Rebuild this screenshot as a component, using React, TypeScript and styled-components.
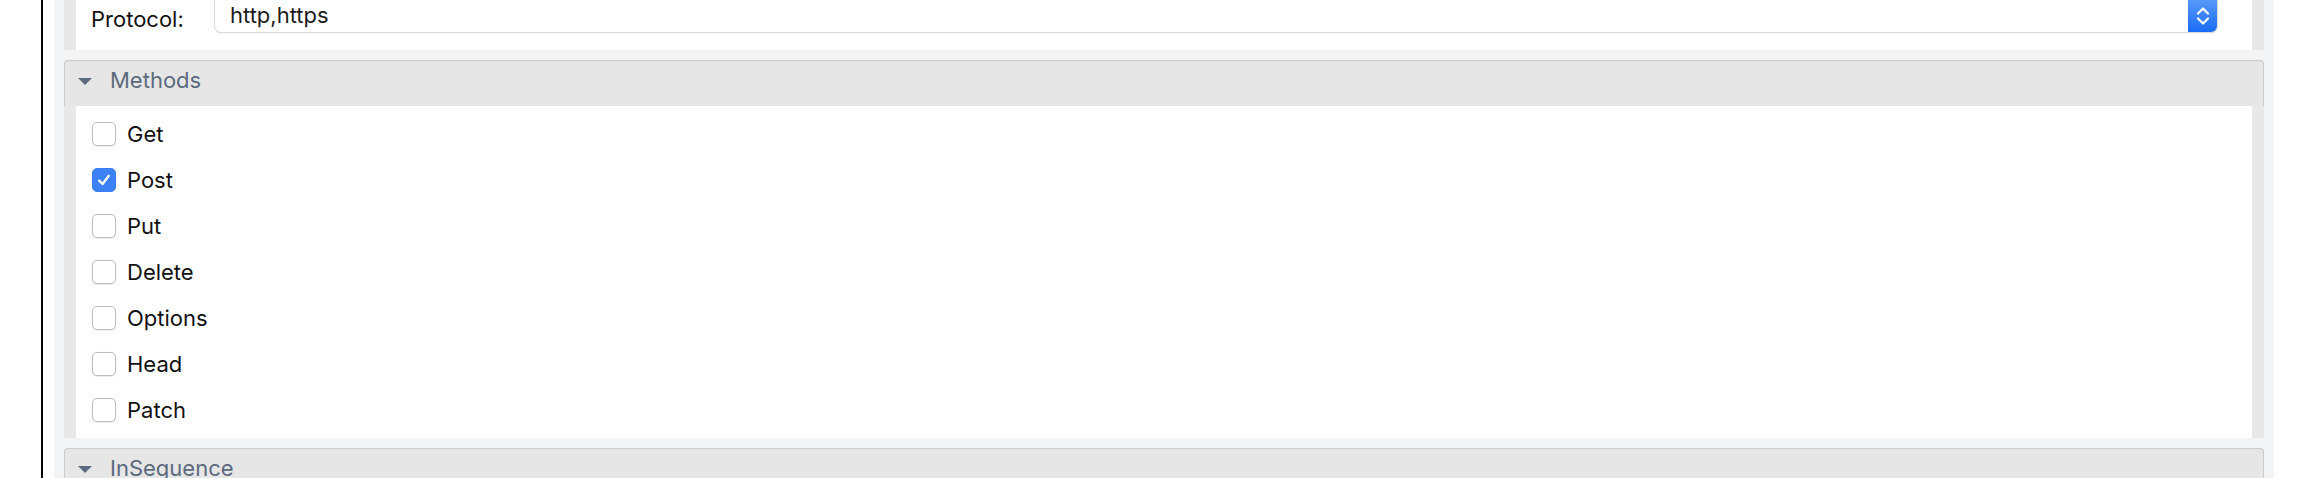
import React from "react";
import styled, { createGlobalStyle } from "styled-components";

const Global = createGlobalStyle`
  html, body { margin: 0; padding: 0; background: #ffffff; }
  body { font-family: Inter, "Noto Sans", "Liberation Sans", sans-serif; -webkit-font-smoothing: antialiased; }
`;

const Page = styled.div`
  display: flex;
  width: 2300px;
  height: 478px;
  overflow: hidden;
  background: #ffffff;
`;

const Gutter = styled.div`
  width: 41px;
  flex: none;
`;

const Rule = styled.div`
  width: 2px;
  flex: none;
  background: #000000;
`;

const Spacer = styled.div`
  width: 11px;
  flex: none;
`;

const Panel = styled.div`
  width: 2200px;
  flex: none;
  padding: 0 10px;
  background: #f3f4f6;
  display: flex;
  flex-direction: column;
  gap: 10px;
  margin-top: -8px;
`;

const Section = styled.section`
  display: flex;
  flex-direction: column;
`;

const Header = styled.div`
  box-sizing: border-box;
  height: 46px;
  display: flex;
  align-items: flex-start;
  padding: 7px 0 0 13px;
  gap: 18px;
  background: #e6e6e6;
  border: 1px solid #cbcbcb;
  border-bottom: none;
  border-radius: 4px 4px 0 0;
  color: #5b6a7d;
  font-size: 22px;
  line-height: 24px;
  flex: none;
`;

const Caret = styled.span`
  width: 0;
  height: 0;
  border-left: 7.5px solid transparent;
  border-right: 7.5px solid transparent;
  border-top: 7.5px solid #5b6a7d;
  margin-top: 10px;
`;

const Body = styled.div`
  background: #e8e8e8;
  padding: 0 12px;
`;

const Inner = styled.div<{ $pad?: string }>`
  background: #ffffff;
  padding: ${(p) => p.$pad ?? "16px 0 16px 16px"};
  display: flex;
  flex-direction: column;
  gap: 22px;
`;

const FieldRow = styled.div`
  height: 58px;
  display: flex;
  align-items: flex-start;
  padding-right: 35px;
`;

const FieldLabel = styled.label`
  box-sizing: border-box;
  width: 139px;
  flex: none;
  padding-left: 15px;
  padding-top: 14px;
  font-size: 22px;
  color: #111111;
`;

const Select = styled.div`
  flex: 1;
  height: 40px;
  display: flex;
  border-radius: 6px;
  background: #ffffff;
  box-shadow: 0 0 0 1px #dcdcdc, 0 1px 1px #b9b9b9;
`;

const SelectValue = styled.div`
  flex: 1;
  padding-left: 15px;
  padding-top: 10px;
  font-size: 22px;
  color: #1c1c1c;
`;

const Stepper = styled.div`
  width: 29px;
  flex: none;
  border-radius: 0 6px 6px 0;
  background: linear-gradient(#66a3fb, #1a6cf5);
  display: flex;
  align-items: flex-end;
  justify-content: center;
  padding-bottom: 6px;
  box-sizing: border-box;
`;

const CheckRow = styled.label`
  display: flex;
  align-items: center;
  gap: 11px;
  height: 24px;
  font-size: 22px;
  color: #111111;
`;

const Box = styled.span<{ $on?: boolean }>`
  width: 24px;
  height: 24px;
  box-sizing: border-box;
  border-radius: 5px;
  flex: none;
  display: flex;
  align-items: center;
  justify-content: center;
  background: ${(p) => (p.$on ? "#3b82f7" : "#ffffff")};
  border: 1px solid ${(p) => (p.$on ? "#3b7cf0" : "#bdbdbd")};
  box-shadow: ${(p) => (p.$on ? "none" : "0 0.5px 1px rgba(0,0,0,0.08)")};
`;

const methods = [
  { name: "Get", on: false },
  { name: "Post", on: true },
  { name: "Put", on: false },
  { name: "Delete", on: false },
  { name: "Options", on: false },
  { name: "Head", on: false },
  { name: "Patch", on: false },
];

export default function App() {
  return (
    <>
      <Global />
      <Page>
        <Gutter />
        <Rule />
        <Spacer />
        <Panel>
          <Section>
            <Body>
              <Inner $pad="0">
                <FieldRow>
                  <FieldLabel>Protocol:</FieldLabel>
                  <Select>
                    <SelectValue>http,https</SelectValue>
                    <Stepper>
                      <svg width="14" height="20" viewBox="0 0 14 20" fill="none">
                        <path d="M2 7.5 L7 2.5 L12 7.5" stroke="#fff" strokeWidth="2.2" strokeLinecap="round" strokeLinejoin="round" />
                        <path d="M2 12.5 L7 17.5 L12 12.5" stroke="#fff" strokeWidth="2.2" strokeLinecap="round" strokeLinejoin="round" />
                      </svg>
                    </Stepper>
                  </Select>
                </FieldRow>
              </Inner>
            </Body>
          </Section>
          <Section>
            <Header>
              <Caret />
              <span>Methods</span>
            </Header>
            <Body>
              <Inner>
                {methods.map((m) => (
                  <CheckRow key={m.name}>
                    <Box $on={m.on}>
                      {m.on && (
                        <svg width="16" height="16" viewBox="0 0 16 16" fill="none">
                          <path d="M3.2 8.6 L6.6 12 L12.8 3.8" stroke="#fff" strokeWidth="2.3" strokeLinecap="round" strokeLinejoin="round" />
                        </svg>
                      )}
                    </Box>
                    <span>{m.name}</span>
                  </CheckRow>
                ))}
              </Inner>
            </Body>
          </Section>
          <Section>
            <Header>
              <Caret />
              <span>InSequence</span>
            </Header>
          </Section>
        </Panel>
      </Page>
    </>
  );
}
